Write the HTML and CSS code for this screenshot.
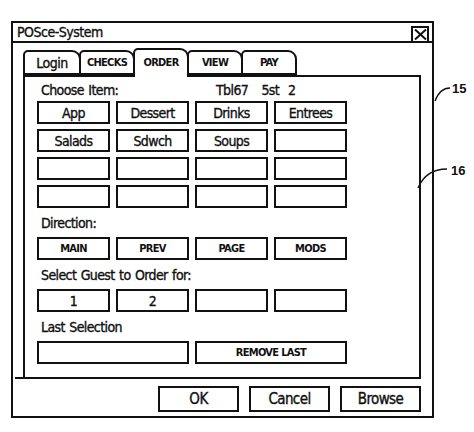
FILE: index.html
```html
<!DOCTYPE html>
<html>
    <head>
        <title>POSce-System</title>
        <link rel="stylesheet" href="styles.css">
    </head>
    <body>
        <div class="window">
            <div class="titlebar">
                <span class="title">POSce-System</span>
                <span class="close">
                    <svg width="13" height="11" viewBox="0 0 13 11"><path d="M1 0.5 L12 10.5 M12 0.5 L1 10.5" stroke="#111" stroke-width="2"/></svg>
                </span>
            </div>
            <div class="frame">
                <div class="tabs">
                    <div class="tab tab_big">Login</div>
                    <div class="tab">CHECKS</div>
                    <div class="tab active">ORDER</div>
                    <div class="tab">VIEW</div>
                    <div class="tab">PAY</div>
                </div>
                <div class="panel">
                    <div class="label first">
                        <span class="label_left">Choose Item:</span>
                        <span>Tbl67&nbsp;&nbsp; 5st&nbsp; 2</span>
                    </div>
                    <div class="grid items">
                        <div class="btn">App</div>
                        <div class="btn">Dessert</div>
                        <div class="btn">Drinks</div>
                        <div class="btn">Entrees</div>
                        <div class="btn">Salads</div>
                        <div class="btn">Sdwch</div>
                        <div class="btn">Soups</div>
                        <div class="btn"></div>
                        <div class="btn"></div>
                        <div class="btn"></div>
                        <div class="btn"></div>
                        <div class="btn"></div>
                        <div class="btn"></div>
                        <div class="btn"></div>
                        <div class="btn"></div>
                        <div class="btn"></div>
                    </div>
                    <div class="label">Direction:</div>
                    <div class="grid">
                        <div class="btn small">MAIN</div>
                        <div class="btn small">PREV</div>
                        <div class="btn small">PAGE</div>
                        <div class="btn small">MODS</div>
                    </div>
                    <div class="label">Select Guest to Order for:</div>
                    <div class="grid">
                        <div class="btn">1</div>
                        <div class="btn">2</div>
                        <div class="btn"></div>
                        <div class="btn"></div>
                    </div>
                    <div class="label">Last Selection</div>
                    <div class="grid">
                        <div class="btn wide"></div>
                        <div class="btn wide small">REMOVE LAST</div>
                    </div>
                </div>
            </div>
            <div class="footer">
                <div class="btn big">OK</div>
                <div class="btn big">Cancel</div>
                <div class="btn big">Browse</div>
            </div>
        </div>
        <svg class="notes" width="474" height="432">
            <path d="M435 101 Q440 88 450 88" fill="none" stroke="#111" stroke-width="1.3"/>
            <text x="452" y="93">15</text>
            <path d="M418 188 Q426 169 447 169" fill="none" stroke="#111" stroke-width="1.3"/>
            <text x="451" y="175">16</text>
        </svg>
    </body>
</html>
```

FILE: styles.css
```css
body {
	margin: 0;
	padding: 21px 0 0 11px;
	background: #ffffff;
	color: #111111;
	font-family: "DejaVu Sans Condensed", "Liberation Sans Narrow", "Liberation Sans", sans-serif;
	font-size: 14px;
	-webkit-text-stroke: 0.35px #111;
}
.window {
	box-sizing: border-box;
	width: 423px;
	height: 397px;
	border: 2px solid #111;
}
.titlebar {
	display: flex;
	align-items: flex-end;
	justify-content: space-between;
	height: 18px;
	border-bottom: 2px solid #111;
	padding: 0 3px 0 4px;
}
.title {
	font-size: 14px;
	line-height: 18px;
	letter-spacing: -0.5px;
}
.close {
	display: flex;
	align-items: center;
	justify-content: center;
	box-sizing: border-box;
	width: 18px;
	height: 15px;
	border: 2px solid #111;
	border-bottom: none;
}
.frame {
	width: 406px;
	margin: 5px 0 0 2px;
	border-bottom: 2px solid #111;
	padding-left: 8px;
	box-sizing: border-box;
}
.tabs {
	display: flex;
	align-items: flex-end;
	height: 27px;
	position: relative;
	z-index: 1;
}
.tab {
	box-sizing: border-box;
	height: 25px;
	width: 56px;
	margin-left: -2px;
	border: 2px solid #111;
	border-radius: 5px 9px 0 0;
	background: #fff;
	display: flex;
	align-items: center;
	justify-content: center;
	font-size: 11px;
	font-weight: bold;
	letter-spacing: -0.7px;
	-webkit-text-stroke: 0;
}
.tab:first-child {
	margin-left: 0;
	width: 58px;
}
.tab_big {
	font-size: 14px;
	font-weight: normal;
	letter-spacing: -0.5px;
	-webkit-text-stroke: 0.35px #111;
}
.tab.active {
	height: 29px;
	margin-bottom: -2px;
	border-bottom: none;
	padding-bottom: 2px;
}
.panel {
	box-sizing: border-box;
	height: 302px;
	border: 2px solid #111;
	border-bottom: none;
	padding: 2px 0 0 12px;
}
.label {
	display: flex;
	height: 18px;
	line-height: 18px;
	margin-top: 6px;
	padding-left: 4px;
	font-size: 14px;
	letter-spacing: -0.6px;
	word-spacing: 1px;
}
.label.first {
	margin-top: 2px;
}
.label_left {
	width: 175px;
}
.grid {
	display: grid;
	grid-template-columns: repeat(4, 73px);
	grid-auto-rows: 23px;
	gap: 5px 6px;
	margin-top: 5px;
}
.items {
	margin-top: 2px;
}
.btn {
	box-sizing: border-box;
	border: 2px solid #111;
	display: flex;
	align-items: center;
	justify-content: center;
	font-size: 14px;
	letter-spacing: -0.6px;
}
.small {
	font-size: 11px;
	font-weight: bold;
	letter-spacing: -0.7px;
	-webkit-text-stroke: 0;
}
.wide {
	grid-column: span 2;
}
.footer {
	display: flex;
	justify-content: flex-end;
	gap: 10px;
	width: 406px;
	margin: 7px 0 0 2px;
	box-sizing: border-box;
}
.big {
	width: 81px;
	height: 26px;
	font-size: 15px;
}
.notes {
	position: absolute;
	left: 0;
	top: 0;
	pointer-events: none;
}
.notes text {
	font-family: "Liberation Sans", sans-serif;
	font-size: 13px;
	font-weight: bold;
	fill: #111;
	-webkit-text-stroke: 0;
}
```
